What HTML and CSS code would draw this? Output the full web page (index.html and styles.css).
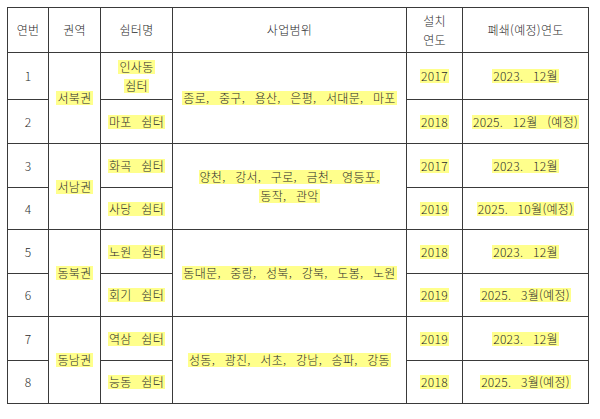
FILE: index.html
```html
<!DOCTYPE html>
<html lang="ko">
<head>
<meta charset="utf-8">
<link rel="stylesheet" href="styles.css">
</head>
<body>
<div class="page">
<table class="grid">
  <colgroup>
    <col class="c-no"><col class="c-area"><col class="c-name"><col class="c-scope"><col class="c-year"><col class="c-close">
  </colgroup>
  <tr class="r-head">
    <th>연번</th><th>권역</th><th>쉼터명</th><th>사업범위</th><th><span class="plain">설치</span><span class="plain">연도</span></th><th>폐쇄(예정)연도</th>
  </tr>
  <tr class="r1">
    <td class="no">1</td>
    <td rowspan="2"><span class="hl">서북권</span></td>
    <td><span class="hl">인사동</span><span class="hl">쉼터</span></td>
    <td rowspan="2"><span class="hl">종로, 중구, 용산, 은평, 서대문, 마포</span></td>
    <td><span class="hl">2017</span></td>
    <td><span class="hl">2023. 12월</span></td>
  </tr>
  <tr class="r2">
    <td class="no">2</td>
    <td><span class="hl">마포 쉼터</span></td>
    <td><span class="hl">2018</span></td>
    <td><span class="hl">2025. 12월 (예정)</span></td>
  </tr>
  <tr class="r3">
    <td class="no">3</td>
    <td rowspan="2"><span class="hl">서남권</span></td>
    <td><span class="hl">화곡 쉼터</span></td>
    <td rowspan="2"><span class="hl">양천, 강서, 구로, 금천, 영등포,</span><span class="hl">동작, 관악</span></td>
    <td><span class="hl">2017</span></td>
    <td><span class="hl">2023. 12월</span></td>
  </tr>
  <tr class="r4">
    <td class="no">4</td>
    <td><span class="hl">사당 쉼터</span></td>
    <td><span class="hl">2019</span></td>
    <td><span class="hl">2025. 10월(예정)</span></td>
  </tr>
  <tr class="r5">
    <td class="no">5</td>
    <td rowspan="2"><span class="hl">동북권</span></td>
    <td><span class="hl">노원 쉼터</span></td>
    <td rowspan="2"><span class="hl">동대문, 중랑, 성북, 강북, 도봉, 노원</span></td>
    <td><span class="hl">2018</span></td>
    <td><span class="hl">2023. 12월</span></td>
  </tr>
  <tr class="r6">
    <td class="no">6</td>
    <td><span class="hl">회기 쉼터</span></td>
    <td><span class="hl">2019</span></td>
    <td><span class="hl">2025. 3월(예정)</span></td>
  </tr>
  <tr class="r7">
    <td class="no">7</td>
    <td rowspan="2"><span class="hl">동남권</span></td>
    <td><span class="hl">역삼 쉼터</span></td>
    <td rowspan="2"><span class="hl">성동, 광진, 서초, 강남, 송파, 강동</span></td>
    <td><span class="hl">2019</span></td>
    <td><span class="hl">2023. 12월</span></td>
  </tr>
  <tr class="r8">
    <td class="no">8</td>
    <td><span class="hl">능동 쉼터</span></td>
    <td><span class="hl">2018</span></td>
    <td><span class="hl">2025. 3월(예정)</span></td>
  </tr>
</table>
</div>
</body>
</html>
```

FILE: styles.css
```css
html, body {
  margin: 0;
  padding: 0;
  background: #ffffff;
}

.page {
  padding: 7px 0 0 7px;
}

.grid {
  border-collapse: collapse;
  table-layout: fixed;
  width: 581px;
  font-family: "Noto Sans CJK KR", "Noto Sans", sans-serif;
  font-size: 12px;
  font-weight: 300;
  color: #2b2b2b;
  letter-spacing: 0.3px;
  word-spacing: 6px;
}

.c-no { width: 41px; }
.c-area { width: 52px; }
.c-name { width: 72px; }
.c-scope { width: 234px; }
.c-year { width: 56px; }
.c-close { width: 126px; }

.grid th,
.grid td {
  border: 1px solid #3a3a3a;
  padding: 0;
  text-align: center;
  vertical-align: middle;
  font-weight: 300;
  line-height: 14px;
}

.grid th {
  color: #2a2a2a;
}

.plain,
.hl {
  display: block;
  width: max-content;
  margin: 0 auto;
  line-height: 14px;
}

.plain + .plain,
.hl + .hl {
  margin-top: 5px;
}

.hl {
  background: #ffff8c;
  padding: 0 1px;
}

.r-head { height: 45px; }
.r1 { height: 47px; }
.r2 { height: 44px; }
.r3 { height: 44px; }
.r4 { height: 42px; }
.r5 { height: 44px; }
.r6 { height: 43px; }
.r7 { height: 44px; }
.r8 { height: 43px; }
```
